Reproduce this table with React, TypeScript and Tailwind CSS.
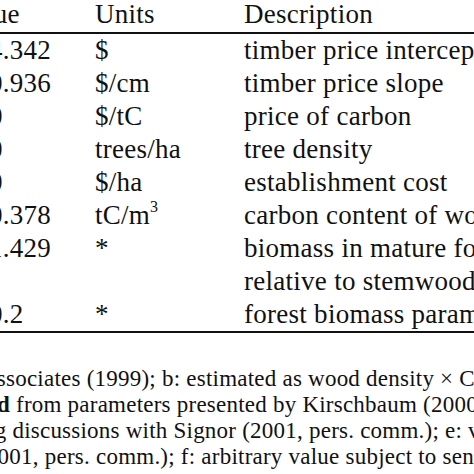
import React from "react";

const rows: { v: string; u: React.ReactNode; d: string }[] = [
  { v: "4.342", u: "$", d: "timber price intercept" },
  { v: "0.936", u: "$/cm", d: "timber price slope" },
  { v: "0", u: "$/tC", d: "price of carbon" },
  { v: "0", u: "trees/ha", d: "tree density" },
  { v: "0", u: "$/ha", d: "establishment cost" },
  {
    v: "0.378",
    u: (
      <>
        tC/m<sup className="text-[16px] align-[4px]">3</sup>
      </>
    ),
    d: "carbon content of wood",
  },
  { v: "1.429", u: "*", d: "biomass in mature forest" },
  { v: "", u: "", d: "relative to stemwood" },
  { v: "0.2", u: "*", d: "forest biomass parameter" },
];

export default function App() {
  return (
    <div className="w-[474px] h-[474px] overflow-hidden bg-white text-[#111] font-['Liberation_Serif']">
      <div className="ml-[-11px] w-[720px] text-[27px] tracking-[0.01em] leading-[33px] whitespace-nowrap">
        <div className="flex h-[34px] mt-[-2px]">
          <div className="w-[106px] shrink-0">
            <span className="inline-block ml-[-32px]">Value</span>
          </div>
          <div className="w-[149px] shrink-0">Units</div>
          <div>Description</div>
        </div>
        <div className="h-[2px] bg-[#111]" />
        {rows.map((r, i) => (
          <div key={i} className="flex h-[33px]">
            <div className="w-[106px] shrink-0">{r.v}</div>
            <div className="w-[149px] shrink-0">{r.u}</div>
            <div>{r.d}</div>
          </div>
        ))}
        <div className="h-[2px] bg-[#111]" />
      </div>
      <div className="mt-[33px] text-[23px] tracking-[0.01em] leading-[26px] whitespace-nowrap">
        <div className="ml-[-20px]">
          Associates (1999); b: estimated as wood density × Carbon fraction
        </div>
        <div className="ml-[-3px]">
          <span className="font-bold">d</span> from parameters presented by Kirschbaum (2000)
        </div>
        <div className="ml-[-55px]">
          during discussions with Signor (2001, pers. comm.); e: value
        </div>
        <div className="ml-[-22px]">
          (2001, pers. comm.); f: arbitrary value subject to sensitivity
        </div>
      </div>
    </div>
  );
}
